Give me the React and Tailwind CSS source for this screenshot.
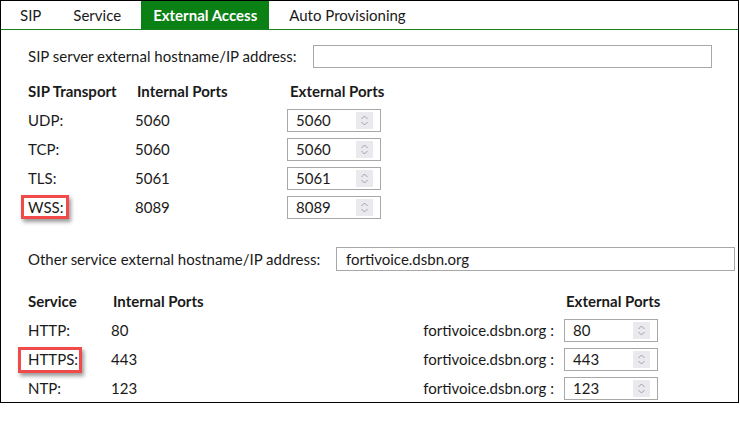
import React from "react";

const font = { fontFamily: "Lato, 'Noto Sans', sans-serif" };

function Spinner() {
  return (
    <span className="flex h-[17px] w-[17px] items-center justify-center bg-[#e9e9ee]">
      <svg width="11" height="15" viewBox="0 0 11 15" fill="none" stroke="#a0a0a8" strokeWidth="1">
        <path d="M2.5 6 L5.5 3 L8.5 6" />
        <path d="M2.5 9 L5.5 12 L8.5 9" />
      </svg>
    </span>
  );
}

function PortInput({ value }) {
  return (
    <div className="flex h-[23px] w-[94px] items-center justify-between border-[1.5px] border-[#a8a8a8] bg-white pl-[8px] pr-[7px]">
      <span>{value}</span>
      <Spinner />
    </div>
  );
}

// red highlight box drawn over a label
function Marked({ children, box }) {
  return (
    <span className="relative">
      {children}
      <span className={`pointer-events-none absolute border-[3px] border-[#f04a4a] shadow-[2px_3px_4px_rgba(0,0,0,0.4)] ${box}`} />
    </span>
  );
}

const transports = [
  { name: "UDP:", internal: "5060", external: "5060" },
  { name: "TCP:", internal: "5060", external: "5060" },
  { name: "TLS:", internal: "5061", external: "5061" },
  { name: "WSS:", internal: "8089", external: "8089", mark: "-left-[7px] -right-[6px] -top-[3px] -bottom-[3px]" },
];

const services = [
  { name: "HTTP:", internal: "80", external: "80" },
  { name: "HTTPS:", internal: "443", external: "443", mark: "-left-[10px] -right-[4px] -top-[3px] -bottom-[5px]" },
  { name: "NTP:", internal: "123", external: "123" },
];

const tabs = ["SIP", "Service", "External Access", "Auto Provisioning"];

export default function App() {
  return (
    <div className="h-[426px] w-[740px] bg-white text-[15px] text-[#1a1a1a]" style={font}>
      <div className="flex h-[403px] w-[739px] flex-col border-[1.5px] border-black">
        <div className="flex h-[29px] shrink-0 items-stretch gap-2 border-b-[1.5px] border-[#17801c] pl-[7px]">
          {tabs.map((t) => (
            <div
              key={t}
              className={
                t === "External Access"
                  ? "flex items-center bg-[#0b8015] px-3 font-bold text-white"
                  : "flex items-center px-3"
              }
            >
              {t}
            </div>
          ))}
        </div>

        <div className="flex flex-col pl-[27px]">
          <div className="mt-[15px] flex h-[23px] items-center">
            <span className="w-[285px]">SIP server external hostname/IP address:</span>
            <div className="h-[23px] w-[399px] border-[1.5px] border-[#a8a8a8]" />
          </div>

          <div className="mt-[9px] flex h-[29px] items-center font-bold">
            <span className="w-[109px]">SIP Transport</span>
            <span className="w-[153px]">Internal Ports</span>
            <span>External Ports</span>
          </div>
          {transports.map((r) => (
            <div key={r.name} className="flex h-[29px] items-center">
              <span className="w-[107px]">{r.mark ? <Marked box={r.mark}>{r.name}</Marked> : r.name}</span>
              <span className="w-[152px]">{r.internal}</span>
              <PortInput value={r.external} />
            </div>
          ))}

          <div className="mt-[25px] flex h-[24px] items-center">
            <span className="w-[308px]">Other service external hostname/IP address:</span>
            <div className="flex h-[24px] w-[399px] items-center border-[1.5px] border-[#a8a8a8] px-[9px]">
              fortivoice.dsbn.org
            </div>
          </div>

          <div className="mt-[16px] flex h-[29px] items-center pr-[80px] font-bold">
            <span className="w-[85px]">Service</span>
            <span className="flex-1">Internal Ports</span>
            <span className="w-[94px] whitespace-nowrap pl-[2px]">External Ports</span>
          </div>
          {services.map((r) => (
            <div key={r.name} className="flex h-[29px] items-center pr-[80px]">
              <span className="w-[83px]">{r.mark ? <Marked box={r.mark}>{r.name}</Marked> : r.name}</span>
              <span className="flex-1">{r.internal}</span>
              <span className="mr-[10px]">fortivoice.dsbn.org :</span>
              <PortInput value={r.external} />
            </div>
          ))}
        </div>
      </div>
    </div>
  );
}
